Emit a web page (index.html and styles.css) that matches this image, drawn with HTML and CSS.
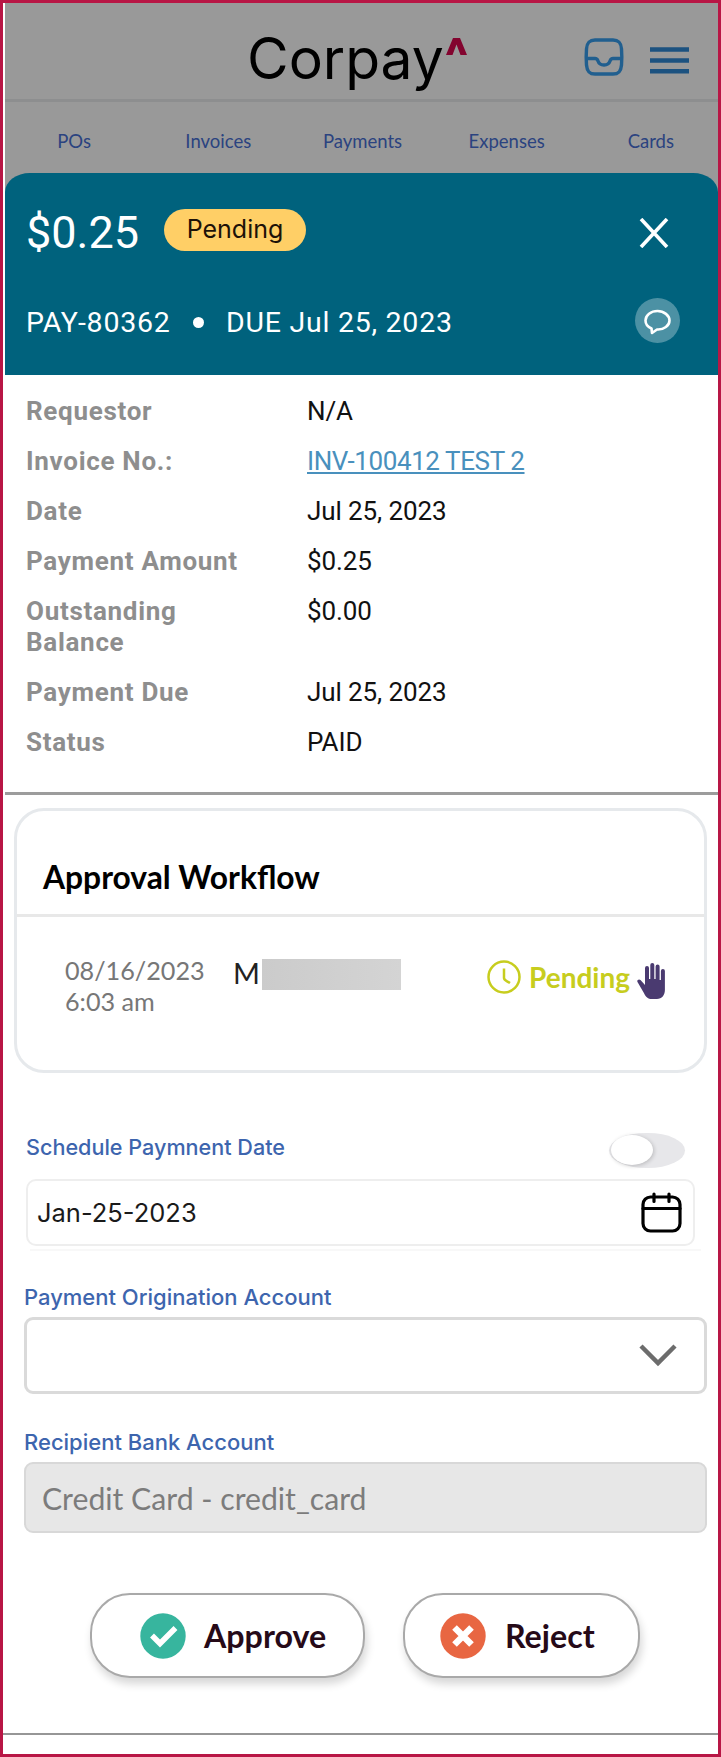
FILE: index.html
```html
<!DOCTYPE html>
<html lang="en">

<head>
  <meta charset="UTF-8">
  <meta name="viewport" content="width=device-width, initial-scale=1.0">
  <title>Corpay - PAY-80362</title>

  <link rel="stylesheet" href="styles.css">
</head>

<body>

  <main class="phone">

    <header class="topbar">
      <div class="logo">
        <span class="logo-text">Corpay</span>
        <svg class="logo-mark" width="21" height="17" viewBox="0 0 21 17">
          <path d="M0 17 7 0h7l7 17h-6.500L10.500 6.500 6.500 17z" fill="#83042f" />
        </svg>
      </div>
      <div class="topbar-icons">
        <svg width="40" height="38" viewBox="0 0 40 38" fill="none" stroke="#215f8f" stroke-width="3.400">
          <path d="M11 2h18c6 0 8 3 8.500 9 .4 5 .4 11 0 16-.5 6-2.500 9-8.500 9H11c-6 0-8-3-8.500-9-.4-5-.4-11 0-16C3 5 5 2 11 2z" />
          <path d="M2.500 20.500H11c2 0 2.500 1 3 2.500 1 3 3 4 6 4s5-1 6-4c.5-1.500 1-2.500 3-2.500h8.500" />
        </svg>
        <svg class="menu" width="39" height="27" viewBox="0 0 39 27" stroke="#1c5280" stroke-width="4.600">
          <path d="M0 2.500h39M0 13.500h39M0 24.300h39" />
        </svg>
      </div>
    </header>

    <nav class="tabs">
      <a>POs</a>
      <a>Invoices</a>
      <a>Payments</a>
      <a>Expenses</a>
      <a>Cards</a>
    </nav>

    <section class="sheet-wrap">
      <div class="sheet">
        <div class="sheet-row sheet-top">
          <span class="price">$0.25</span>
          <span class="badge">Pending</span>
          <svg class="close" width="30" height="30" viewBox="0 0 30 30" stroke="#fff" stroke-width="3.600">
            <path d="M2 1 28 29M28 1 2 29" />
          </svg>
        </div>
        <div class="sheet-row sheet-sub">
          <span class="pay-id">PAY-80362</span>
          <span class="dot"></span>
          <span class="due">DUE Jul 25, 2023</span>
          <span class="comment">
            <svg width="27" height="26" viewBox="0 0 27 26" fill="none" stroke="#fff" stroke-width="2.600" stroke-linejoin="round">
              <path d="M13.500 2C7 2 1.500 6 1.500 11.500c0 3.500 2.500 6.500 6 8L8 24l5-3.500c7 .5 12.500-4 12.500-9S20 2 13.500 2z" />
            </svg>
          </span>
        </div>
      </div>
    </section>

    <dl class="details">
      <dt>Requestor</dt>
      <dd>N/A</dd>
      <dt>Invoice No.:</dt>
      <dd><a class="link">INV-100412 TEST 2</a></dd>
      <dt>Date</dt>
      <dd>Jul 25, 2023</dd>
      <dt>Payment Amount</dt>
      <dd>$0.25</dd>
      <dt>Outstanding Balance</dt>
      <dd>$0.00</dd>
      <dt>Payment Due</dt>
      <dd>Jul 25, 2023</dd>
      <dt>Status</dt>
      <dd>PAID</dd>
    </dl>

    <section class="card">
      <h2>Approval Workflow</h2>
      <div class="step">
        <span class="step-date">08/16/2023<br>6:03 am</span>
        <span class="step-name">M</span>
        <span class="redacted"></span>
        <span class="step-status">
          <svg width="34" height="34" viewBox="0 0 34 34" fill="none" stroke="#c7cd1e" stroke-width="2.500">
            <circle cx="17" cy="17" r="15.500" />
            <path d="M17 8.500V18c0 2.500 3 3 6 5" />
          </svg>
          <b>Pending</b>
          <svg class="hand" width="28" height="36" viewBox="0 0 28 36" fill="#4a3a70">
            <path d="M8 18V5a1.800 1.800 0 0 1 4 0v11h1.300V2a1.800 1.800 0 0 1 4 0v14h1.300V3.500a1.800 1.800 0 0 1 4 0V17h1.300V8a1.800 1.800 0 0 1 4 0v19c0 5-3 9-8 9h-5c-4 0-6-2-8-6L.5 19c-1-2 1.500-3.500 3-2L8 22z" />
          </svg>
        </span>
      </div>
    </section>

    <form class="form">
      <div class="schedule">
        <label>Schedule Paymnent Date</label>
        <span class="toggle"></span>
      </div>
      <div class="date-input">
        <span>Jan-25-2023</span>
        <svg width="41" height="41" viewBox="0 0 41 41" fill="none" stroke="#000" stroke-width="3.200" stroke-linecap="round">
          <rect x="2" y="5" width="37" height="34" rx="7.500" />
          <path d="M2 16.500h37M13 2v7.500M28 2v7.500" />
        </svg>
      </div>
      <div class="hairline"></div>

      <label class="origin-label">Payment Origination Account</label>
      <div class="select">
        <svg width="38" height="23" viewBox="0 0 38 23" fill="none" stroke="#6c6c6c" stroke-width="4.500">
          <path d="M2 2 19 19 36 2" />
        </svg>
      </div>

      <label class="recipient-label">Recipient Bank Account</label>
      <div class="disabled-input">Credit Card - credit_card</div>
    </form>

    <div class="actions">
      <button class="btn approve">
        <svg width="46" height="46" viewBox="0 0 46 46">
          <circle cx="23" cy="23" r="22.700" fill="#37b59e" />
          <path d="M12 22.500 20 30.500 35.500 15" fill="none" stroke="#fff" stroke-width="5.500" />
        </svg>
        Approve
      </button>
      <button class="btn reject">
        <svg width="46" height="46" viewBox="0 0 46 46">
          <circle cx="23" cy="23" r="22.700" fill="#e86642" />
          <path d="M14.500 14.500 31.500 31.500M31.500 14.500 14.500 31.500" stroke="#fff" stroke-width="6.500" />
        </svg>
        Reject
      </button>
    </div>

  </main>

</body>

</html>
```
FILE: styles.css
```css
* {
  box-sizing: border-box;
}

body {
  margin: 0;
  font-family: Lato, sans-serif;
  background-color: #fff;
}

.phone {
  width: 721px;
  height: 1757px;
  border: 3px solid #b81645;
  padding: 0 0 0 2px;
  overflow: hidden;
}

.topbar {
  position: relative;
  height: 99px;
  background-color: #999;
  border-bottom: 3px solid #8d8e8f;
}

.logo {
  display: flex;
  align-items: flex-start;
  padding-left: 242px;
}

.logo-text {
  font-family: Inter, sans-serif;
  font-size: 57px;
  font-weight: 400;
  line-height: 68px;
  margin-top: 22px;
  color: #000;
}

.logo-mark {
  margin-top: 35px;
  margin-left: 2px;
}

.topbar-icons {
  position: absolute;
  right: 29px;
  top: 35px;
  display: flex;
  align-items: flex-start;
  gap: 26px;
}

.menu {
  margin-top: 9px;
}

.tabs {
  display: grid;
  grid-template-columns: repeat(5, 144.2px);
  height: 71px;
  padding-top: 27px;
  background-color: #999;
  color: #2b4380;
  font-size: 18.5px;
  line-height: 24px;
  text-align: center;
}

.tabs a {
  position: relative;
  left: -3px;
}

.sheet-wrap {
  background-color: #999;
}

.sheet {
  height: 202px;
  padding: 33px 38px 0 21px;
  border-radius: 25px 25px 0 0 / 19px 19px 0 0;
  background-color: #00627d;
  color: #fff;
  font-family: Roboto, sans-serif;
}

.sheet-row {
  display: flex;
  align-items: center;
}

.sheet-top {
  height: 54px;
}

.price {
  width: 138px;
  font-size: 45px;
  line-height: 54px;
}

.badge {
  width: 142px;
  height: 42px;
  margin-bottom: 7px;
  border-radius: 21px;
  background-color: #ffcf66;
  color: #1d1208;
  font-family: Inter, sans-serif;
  font-size: 25px;
  line-height: 40px;
  text-align: center;
}

.close {
  margin-left: auto;
  margin-right: 11px;
}

.sheet-sub {
  height: 46px;
  margin-top: 37px;
  font-size: 28.5px;
  letter-spacing: 0.75px;
}

.pay-id {
  width: 167px;
  padding-top: 4px;
}

.dot {
  width: 11px;
  height: 11px;
  margin-top: 4px;
  margin-right: 22px;
  border-radius: 50%;
  background-color: #fff;
}

.due {
  padding-top: 4px;
}

.comment {
  display: flex;
  align-items: center;
  justify-content: center;
  width: 45px;
  height: 45px;
  margin-left: auto;
  padding-top: 3px;
  border-radius: 50%;
  background-color: #4c91a4;
}

.details {
  display: grid;
  grid-template-columns: 240px 1fr;
  column-gap: 41px;
  row-gap: 19px;
  height: 420px;
  margin: 0;
  padding: 21px 21px 0;
  align-content: start;
  border-bottom: 3px solid #9c9c9c;
  font-family: Roboto, sans-serif;
  font-size: 26px;
  line-height: 31px;
}

.details dt {
  color: #8e8e8e;
  font-weight: 700;
  letter-spacing: 0.7px;
}

.details dd {
  margin: 0;
  color: #111;
  letter-spacing: -0.1px;
}

.details .link {
  color: #4990bd;
  letter-spacing: -0.4px;
  text-decoration: underline;
}

.card {
  height: 265px;
  margin: 13px 11px 0 9px;
  border: 3px solid #e6e9ec;
  border-radius: 30px;
}

.card h2 {
  height: 106px;
  margin: 0;
  padding: 48px 26px 0;
  border-bottom: 3px solid #e8e8e8;
  font-size: 31.8px;
  line-height: 37px;
  color: #000;
}

.step {
  display: flex;
  align-items: flex-start;
  padding: 38px 39px 0 48px;
}

.step-date {
  width: 168px;
  color: #777;
  font-size: 25.2px;
  line-height: 31px;
}

.step-name {
  width: 29px;
  color: #222;
  font-size: 29px;
  line-height: 35px;
}

.redacted {
  width: 139px;
  height: 31px;
  margin-top: 4px;
  background: linear-gradient(90deg, #cbcbcb, #d4d4d4);
}

.step-status {
  display: flex;
  align-items: center;
  margin-left: auto;
  color: #c7cd1e;
  font-size: 28px;
  line-height: 34px;
}

.step-status b {
  margin: 0 7px 0 8px;
}

.hand {
  margin-top: 8px;
}

.form {
  padding: 53px 11px 0 19px;
  font-family: Inter, sans-serif;
}

.form label {
  display: block;
  color: #3d65ae;
  font-size: 21.6px;
  font-weight: 500;
  line-height: 30px;
}

.schedule {
  display: flex;
  justify-content: space-between;
  height: 53px;
  padding: 6px 22px 0 2px;
}

.toggle {
  width: 76px;
  height: 35px;
  margin-top: 1px;
  border-radius: 38px / 18px;
  background-color: #e7e7ea;
}

.toggle::before {
  content: "";
  display: block;
  width: 42px;
  height: 30px;
  margin: 2px 0 0 2px;
  border-radius: 50%;
  background-color: #fff;
  box-shadow: 1px 1px 4px rgba(0, 0, 0, 0.2);
}

.date-input {
  display: flex;
  align-items: center;
  justify-content: space-between;
  height: 67px;
  margin: 0 12px 0 2px;
  padding: 0 11px 0 9px;
  border: 2px solid #eee;
  border-radius: 10px;
  color: #1a1a1a;
  font-size: 25.5px;
}

.hairline {
  height: 2px;
  margin: 3px 6px 0 6px;
  background-color: #f8f8f8;
}

.form .origin-label {
  margin-top: 31px;
  font-size: 22px;
}

.select {
  display: flex;
  align-items: center;
  justify-content: flex-end;
  height: 77px;
  margin-top: 5px;
  padding-right: 27px;
  border: 3px solid #dadada;
  border-radius: 9px;
}

.form .recipient-label {
  margin-top: 33px;
  font-size: 22px;
}

.disabled-input {
  height: 71px;
  margin-top: 5px;
  padding: 0 16px;
  border: 2px solid #d8d8d8;
  border-radius: 9px;
  background-color: #e7e7e7;
  color: #7c7c7c;
  font-family: Lato, sans-serif;
  font-size: 30.2px;
  line-height: 69px;
}

.actions {
  display: flex;
  gap: 38px;
  height: 202px;
  padding: 60px 0 0 87px;
  margin-left: -2px;
  border-bottom: 2px solid #969696;
}

.btn {
  display: flex;
  align-items: center;
  height: 85px;
  padding: 0;
  border: 2px solid #a9a9a9;
  border-radius: 40px;
  background-color: #fff;
  box-shadow: 2px 6px 8px rgba(0, 0, 0, 0.16);
  color: #260a18;
  font-family: Lato, sans-serif;
  font-size: 32.2px;
  font-weight: 700;
}

.approve {
  width: 275px;
  padding-left: 48px;
  gap: 18px;
}

.reject {
  width: 237px;
  padding-left: 35px;
  gap: 19px;
}
```
